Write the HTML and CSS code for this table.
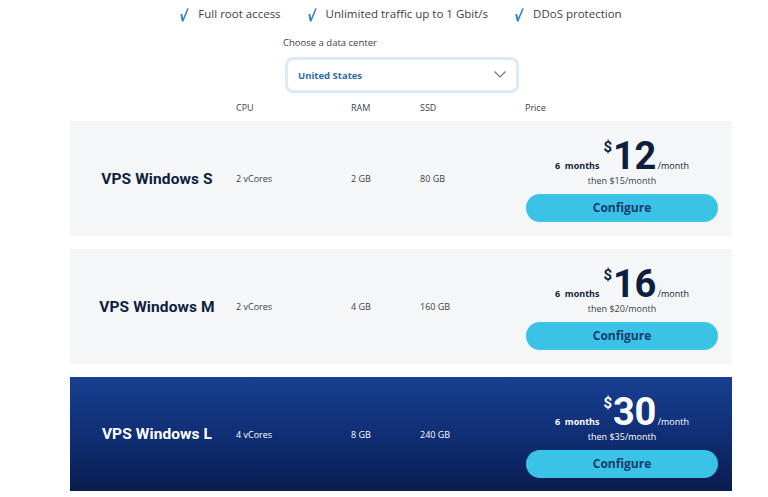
FILE: index.html
```html
<!DOCTYPE html>
<html>
<head>
<meta charset="utf-8">
<link rel="stylesheet" href="styles.css">
</head>
<body>
<div class="page">
  <ul class="features">
    <li><svg class="check" viewBox="0 0 9 14" width="9" height="14"><path d="M0.3 6.2 L2.2 5.9 L3.1 10.2 L7.3 0.3 L8.8 0.6 L3.4 13.6 L1.9 13.6 Z" fill="#2b7fd0"/></svg><span>Full root access</span></li>
    <li><svg class="check" viewBox="0 0 9 14" width="9" height="14"><path d="M0.3 6.2 L2.2 5.9 L3.1 10.2 L7.3 0.3 L8.8 0.6 L3.4 13.6 L1.9 13.6 Z" fill="#2b7fd0"/></svg><span>Unlimited traffic up to 1 Gbit/s</span></li>
    <li><svg class="check" viewBox="0 0 9 14" width="9" height="14"><path d="M0.3 6.2 L2.2 5.9 L3.1 10.2 L7.3 0.3 L8.8 0.6 L3.4 13.6 L1.9 13.6 Z" fill="#2b7fd0"/></svg><span>DDoS protection</span></li>
  </ul>

  <div class="dc">
    <div class="dc-label">Choose a data center</div>
    <div class="select">
      <span class="select-value">United States</span>
      <svg class="chev" viewBox="0 0 12 7" width="12" height="7"><path d="M0.5 0.5 L6 6 L11.5 0.5" fill="none" stroke="#6d7480" stroke-width="1.1"/></svg>
    </div>
  </div>

  <div class="grid head">
    <div></div>
    <div>CPU</div>
    <div>RAM</div>
    <div>SSD</div>
    <div>Price</div>
  </div>

  <div class="grid card">
    <div class="name">VPS Windows S</div>
    <div class="spec">2 vCores</div>
    <div class="spec">2 GB</div>
    <div class="spec">80 GB</div>
    <div class="price">
      <div class="price-line"><span class="term">6&nbsp; months</span><span class="cur">$</span><span class="amount">12</span><span class="per">/month</span></div>
      <div class="then">then $15/month</div>
      <div class="btn">Configure</div>
    </div>
  </div>

  <div class="grid card">
    <div class="name">VPS Windows M</div>
    <div class="spec">2 vCores</div>
    <div class="spec">4 GB</div>
    <div class="spec">160 GB</div>
    <div class="price">
      <div class="price-line"><span class="term">6&nbsp; months</span><span class="cur">$</span><span class="amount">16</span><span class="per">/month</span></div>
      <div class="then">then $20/month</div>
      <div class="btn">Configure</div>
    </div>
  </div>

  <div class="grid card dark">
    <div class="name">VPS Windows L</div>
    <div class="spec">4 vCores</div>
    <div class="spec">8 GB</div>
    <div class="spec">240 GB</div>
    <div class="price">
      <div class="price-line"><span class="term">6&nbsp; months</span><span class="cur">$</span><span class="amount">30</span><span class="per">/month</span></div>
      <div class="then">then $35/month</div>
      <div class="btn">Configure</div>
    </div>
  </div>
</div>
</body>
</html>
```

FILE: styles.css
```css
* { box-sizing: border-box; }
html, body { margin: 0; padding: 0; background: #ffffff; }
body {
  font-family: "Open Sans", "Liberation Sans", sans-serif;
  color: #333a44;
}
.page {
  width: 662px;
  margin-left: 70px;
}
.features {
  list-style: none;
  margin: 0;
  padding: 6px 0 0 0;
  display: flex;
  justify-content: center;
  gap: 27px;
}
.features li {
  display: flex;
  align-items: center;
  gap: 9px;
  font-size: 11.5px;
  line-height: 16px;
  color: #3a3f47;
}
.check { display: block; margin-top: 1px; }

.dc {
  width: 236px;
  margin: 15px auto 0;
}
.dc-label {
  font-size: 9.5px;
  line-height: 12px;
  color: #3a3f47;
  margin-bottom: 8px;
}
.select {
  margin-left: 2px;
  height: 36px;
  border: 3px solid #dceaf6;
  border-radius: 8px;
  background: #fff;
  display: flex;
  align-items: center;
  justify-content: space-between;
  padding: 0 10px 0 10px;
}
.select-value {
  font-size: 9.5px;
  font-weight: 700;
  color: #2c6aa8;
}
.chev { display: block; margin-top: -1px; }

.grid {
  display: grid;
  grid-template-columns: 166px 115px 69px 105px 194px;
  padding-right: 13px;
}
.head {
  margin-top: 9px;
  margin-bottom: 7px;
  font-size: 9px;
  line-height: 12px;
  color: #3a3f47;
}
.card {
  height: 115px;
  background: #f4f6f8;
  align-items: center;
  margin-bottom: 13px;
  color: #0e1f3d;
}
.card.dark {
  background: linear-gradient(180deg, #173f90 0%, #0f2d72 55%, #0a1c4e 100%);
  color: #ffffff;
  height: 114px;
}
.name {
  font-family: Roboto, "Liberation Sans", sans-serif;
  font-weight: 700;
  font-size: 15.5px;
  text-align: center;
  padding-left: 8px;
  letter-spacing: 0.1px;
}
.spec {
  font-size: 9px;
  color: #3a3f47;
}
.dark .spec { color: #ffffff; }
.price {
  display: flex;
  flex-direction: column;
  align-items: center;
  padding-top: 2px;
}
.price-line {
  display: flex;
  align-items: baseline;
  height: 38px;
  white-space: nowrap;
}
.term {
  font-size: 9px;
  font-weight: 700;
  margin-right: 4px;
}
.cur {
  align-self: flex-start;
  margin-top: 3px;
  font-family: Roboto, "Liberation Sans", sans-serif;
  font-weight: 700;
  font-size: 15px;
  line-height: 15px;
  margin-right: 1px;
}
.amount {
  font-family: Roboto, "Liberation Sans", sans-serif;
  font-weight: 700;
  font-size: 38px;
  line-height: 38px;
  letter-spacing: -0.5px;
}
.per {
  font-size: 9px;
  margin-left: 2px;
}
.then {
  font-size: 9px;
  line-height: 12px;
  color: #3a3f47;
}
.dark .then { color: #ffffff; }
.btn {
  margin-top: 7px;
  width: 192px;
  height: 28px;
  border-radius: 14px;
  background: #3ac3e6;
  color: #173a6c;
  font-weight: 700;
  font-size: 12px;
  line-height: 28px;
  text-align: center;
}
```
